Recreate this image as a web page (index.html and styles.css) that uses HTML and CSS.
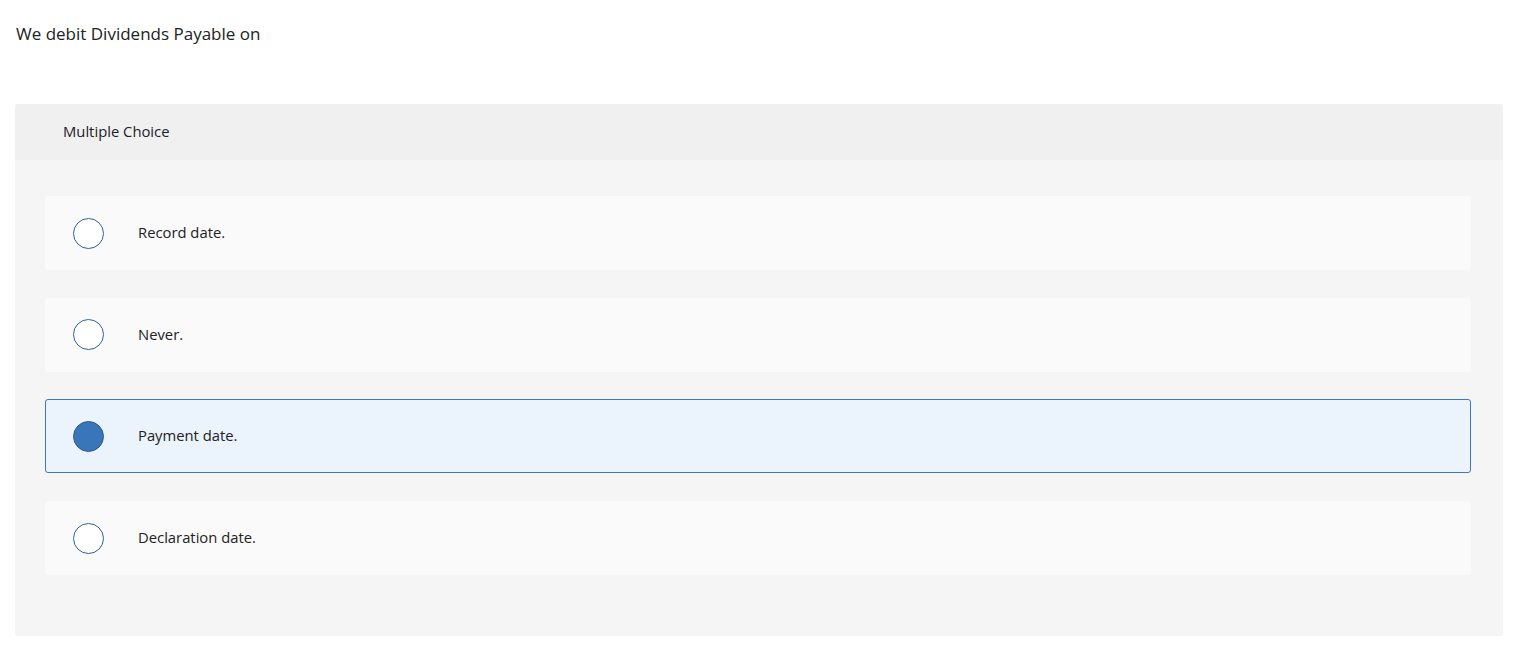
FILE: index.html
```html
<!DOCTYPE html>
<html lang="en">
<head>
    <meta charset="UTF-8">
    <title>Multiple Choice</title>
    <link rel="stylesheet" href="styles.css">
</head>
<body>
    <div class="prompt">We debit Dividends Payable on</div>

    <div class="question">
        <div class="question-header">Multiple Choice</div>
        <div class="choices">
            <label class="choice">
                <span class="radio"></span>
                <span class="choice-text">Record date.</span>
            </label>
            <label class="choice">
                <span class="radio"></span>
                <span class="choice-text">Never.</span>
            </label>
            <label class="choice selected">
                <span class="radio"></span>
                <span class="choice-text">Payment date.</span>
            </label>
            <label class="choice">
                <span class="radio"></span>
                <span class="choice-text">Declaration date.</span>
            </label>
        </div>
    </div>
</body>
</html>
```

FILE: styles.css
```css
* {
    box-sizing: border-box;
    margin: 0;
    padding: 0;
}

body {
    font-family: 'Open Sans', 'Noto Sans', sans-serif;
    background-color: #fff;
    color: #1a1a1a;
    padding: 0 19px 0 15px;
}

.prompt {
    font-size: 17px;
    line-height: 20px;
    padding: 24px 0 0 1px;
    height: 104px;
    color: #222;
}

.question {
    background-color: #f5f5f5;
    border-radius: 3px;
    padding-bottom: 61px;
}

.question-header {
    background-color: #f0f0f0;
    border-radius: 3px 3px 0 0;
    height: 56px;
    padding: 0 0 2px 48px;
    display: flex;
    align-items: center;
    font-size: 14.8px;
    color: #1c1c2a;
}

.choices {
    display: flex;
    flex-direction: column;
    gap: 27.7px;
    padding: 36px 32px 0 30px;
}

.choice {
    display: flex;
    align-items: center;
    height: 74px;
    padding-left: 27px;
    background-color: #fafafa;
    border: 1px solid #fafafa;
    border-radius: 3px;
    font-size: 14.8px;
    color: #222;
    cursor: pointer;
}

.choice.selected {
    background-color: #ebf3fc;
    border-color: #3b78c1;
}

.radio {
    width: 31px;
    height: 31px;
    border-radius: 50%;
    border: 1px solid #2f609b;
    background-color: #fff;
    flex-shrink: 0;
}

.choice.selected .radio {
    background-color: #3975b9;
    border-color: #2c5d96;
}

.choice-text {
    margin: 0 0 2px 34px;
}
```
